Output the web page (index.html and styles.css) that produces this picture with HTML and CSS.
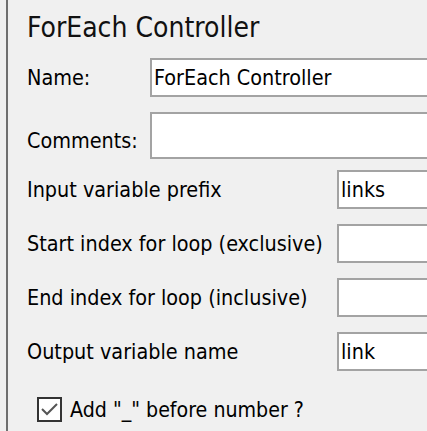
FILE: index.html
```html
<!DOCTYPE html>
<html lang="en">
<head>
    <meta charset="UTF-8">
    <title>ForEach Controller</title>
    <link rel="stylesheet" href="styles.css">
</head>
<body>
    <div class="panel">
        <h1 class="titulo">ForEach Controller</h1>

        <div class="fila fila-nombre">
            <label class="etiqueta corta" for="nombre">Name:</label>
            <input type="text" id="nombre" class="campo" value="ForEach Controller">
        </div>

        <div class="fila fila-comentario">
            <label class="etiqueta corta" for="comentarios">Comments:</label>
            <div id="comentarios" class="campo area"></div>
        </div>

        <div class="fila">
            <label class="etiqueta larga" for="prefijo">Input variable prefix</label>
            <input type="text" id="prefijo" class="campo" value="links">
        </div>

        <div class="fila">
            <label class="etiqueta larga" for="inicio">Start index for loop (exclusive)</label>
            <input type="text" id="inicio" class="campo" value="">
        </div>

        <div class="fila">
            <label class="etiqueta larga" for="fin">End index for loop (inclusive)</label>
            <input type="text" id="fin" class="campo" value="">
        </div>

        <div class="fila">
            <label class="etiqueta larga" for="salida">Output variable name</label>
            <input type="text" id="salida" class="campo" value="link">
        </div>

        <div class="check">
            <span class="caja">
                <svg width="21" height="21" viewBox="0 0 21 21">
                    <path d="M3 10 L8 15 L18 5" fill="none" stroke="#555" stroke-width="2"/>
                </svg>
            </span>
            <span class="check-texto">Add "_" before number ?</span>
        </div>
    </div>
</body>
</html>
```

FILE: styles.css
```css
html, body {
    margin: 0;
    padding: 0;
    height: 100%;
    overflow: hidden;
}
body {
    background-color: #f0f0f0;
    font-family: "DejaVu Sans", Verdana, sans-serif;
    font-stretch: condensed;
    color: #000;
}
.panel {
    margin-left: 6px;
    border-left: 2px solid #6f6f6f;
    height: 100%;
    width: 480px;
    padding-left: 19px;
    box-sizing: border-box;
}
.titulo {
    margin: 0;
    padding-top: 11px;
    height: 49px;
    box-sizing: border-box;
    font-size: 28px;
    font-weight: normal;
    line-height: 34px;
    color: #111;
}
.fila {
    display: flex;
    align-items: center;
    height: 39px;
    margin-bottom: 15px;
}
.fila-nombre {
    margin-top: 9px;
}
.fila-comentario {
    height: 47px;
    margin-bottom: 11px;
}
.fila-comentario .etiqueta {
    padding-top: 10px;
}
.etiqueta {
    font-size: 21.4px;
    flex: none;
}
.corta {
    width: 123px;
}
.larga {
    width: 310px;
}
.campo {
    flex: 1;
    height: 100%;
    box-sizing: border-box;
    border: 2px solid #a3a3a3;
    background: #fff;
    font-family: inherit;
    font-stretch: condensed;
    font-size: 21.4px;
    padding: 0 2px;
    margin: 0;
    outline: none;
}
.check {
    display: flex;
    align-items: center;
    margin-left: 10px;
    padding-top: 11px;
}
.caja {
    width: 25px;
    height: 25px;
    box-sizing: border-box;
    border: 2px solid #333;
    background: #fff;
    display: flex;
    align-items: center;
    justify-content: center;
}
.check-texto {
    font-size: 21.2px;
    margin-left: 8px;
}
```
